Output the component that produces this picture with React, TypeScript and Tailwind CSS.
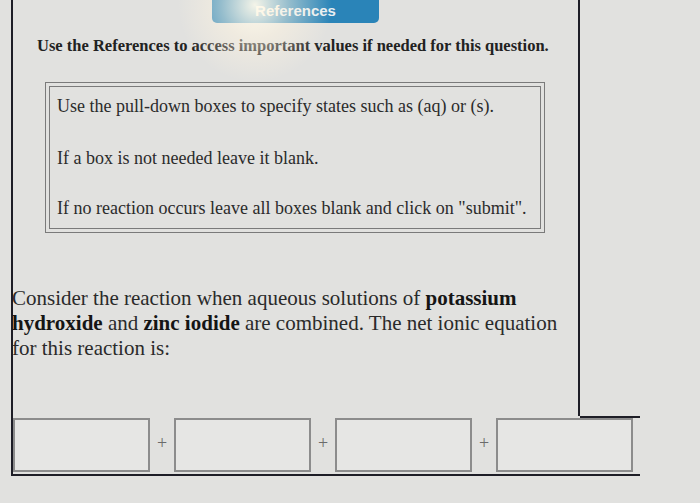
import React from 'react'

const serif = "font-['Liberation_Serif','Times_New_Roman',serif]"

function AnswerBox() {
  return <div className="h-[54px] w-[137px] border-2 border-[#8c8c8c] bg-[#e6e6e4]" />
}

function Plus() {
  return <span className="w-[24px] pt-[12px] text-center text-[18px] text-[#6b6b6b]">+</span>
}

export default function App() {
  return (
    <div className={`relative h-[503px] w-[700px] overflow-hidden bg-[#e1e1df] ${serif}`}>
      {/* glare from the photo */}
      <div className="pointer-events-none absolute left-[170px] top-[-70px] h-[150px] w-[170px] rounded-full bg-[radial-gradient(circle,rgba(255,250,235,0.95)_0%,rgba(255,245,225,0.5)_30%,rgba(255,255,255,0)_68%)]" />

      <div className="pl-[11px]">
        {/* question panel */}
        <div className="flex h-[416px] w-[569px] flex-col border-x-2 border-[#1d1d26]">
          <div className="ml-[199px] flex h-[23px] w-[167px] items-center justify-center rounded-b-[5px] bg-[#2a84b8] font-['Liberation_Sans',Arial,sans-serif] text-[15px] font-bold text-[#e8eef2]">
            <span className="text-[#f6efe2]">Ref</span>erences
          </div>

          <p className="ml-[24px] mt-[11px] text-[16.5px] font-bold text-[#222]">
            Use the References to access important values if needed for this question.
          </p>

          <div className="ml-[32px] mt-[23px] w-[500px] border border-[#7a7a7a] p-[3px]">
            <div className="h-[143px] border border-[#7a7a7a] px-[7px] pt-[8px] text-[18px] leading-[22px] text-[#2b2b2b]">
              <p>Use the pull-down boxes to specify states such as (aq) or (s).</p>
              <p className="mt-[30px]">If a box is not needed leave it blank.</p>
              <p className="mt-[28px]">If no reaction occurs leave all boxes blank and click on "submit".</p>
            </div>
          </div>

          <p className="ml-[-1px] mt-[53px] w-[562px] text-[21px] leading-[25px] text-[#2a2a2a]">
            Consider the reaction when aqueous solutions of <b className="text-[#151515]">potassium hydroxide</b> and{' '}
            <b className="text-[#151515]">zinc iodide</b> are combined. The net ionic equation for this reaction is:
          </p>
        </div>

        {/* equation row overflows the panel */}
        <div className="flex w-[629px] flex-col border-b-2 border-l-2 border-[#1d1d26]">
          <div className="ml-[567px] border-t-2 border-[#1d1d26]" />
          <div className="flex items-start pb-[2px]">
            <AnswerBox />
            <Plus />
            <AnswerBox />
            <Plus />
            <AnswerBox />
            <Plus />
            <AnswerBox />
          </div>
        </div>
      </div>
    </div>
  )
}
